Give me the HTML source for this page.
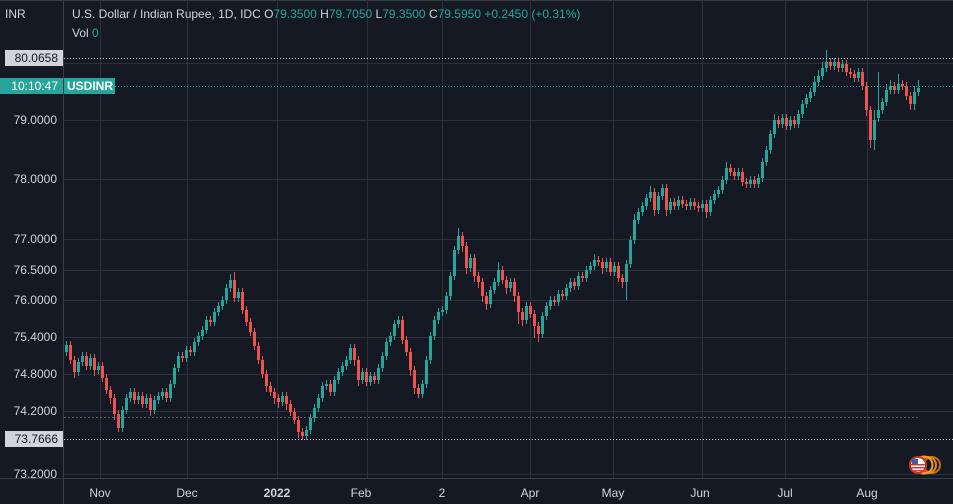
<!DOCTYPE html>
<html><head><meta charset="utf-8"><style>
html,body{margin:0;padding:0;background:#151924;width:953px;height:504px;overflow:hidden;font-family:"Liberation Sans",sans-serif}
svg{display:block}
</style></head><body>
<svg width="953" height="504" xmlns="http://www.w3.org/2000/svg" font-family="Liberation Sans, sans-serif">
<rect width="953" height="504" fill="#151924"/>
<line x1="0" y1="0.5" x2="953" y2="0.5" stroke="#3a3e48"/>
<g stroke="#2c303b" stroke-width="1">
<line x1="100.5" y1="0" x2="100.5" y2="478"/><line x1="187.5" y1="0" x2="187.5" y2="478"/>
<line x1="277.5" y1="0" x2="277.5" y2="478"/><line x1="367.5" y1="0" x2="367.5" y2="478"/>
<line x1="442.5" y1="0" x2="442.5" y2="478"/><line x1="530.5" y1="0" x2="530.5" y2="478"/>
<line x1="613.5" y1="0" x2="613.5" y2="478"/><line x1="702.5" y1="0" x2="702.5" y2="478"/>
<line x1="785.5" y1="0" x2="785.5" y2="478"/><line x1="867.5" y1="0" x2="867.5" y2="478"/>
<line x1="64" y1="63.5" x2="953" y2="63.5"/><line x1="64" y1="120.5" x2="953" y2="120.5"/>
<line x1="64" y1="179.5" x2="953" y2="179.5"/><line x1="64" y1="239.5" x2="953" y2="239.5"/>
<line x1="64" y1="270.5" x2="953" y2="270.5"/><line x1="64" y1="300.5" x2="953" y2="300.5"/>
<line x1="64" y1="337.5" x2="953" y2="337.5"/><line x1="64" y1="374.5" x2="953" y2="374.5"/>
<line x1="64" y1="411.5" x2="953" y2="411.5"/><line x1="64" y1="474.5" x2="953" y2="474.5"/>
</g>
<g stroke="#26a69a" fill="none">
<path stroke-width="1" d="M66.5 341V356M78.5 358V376M82.5 352V366M90.5 354V370M98.5 362V374M122.5 406V432M126.5 394V414M130.5 388V402M138.5 392V404M146.5 394V408M154.5 396V414M158.5 392V404M162.5 388V400M170.5 380V402M174.5 364V388M178.5 352V372M186.5 346V362M194.5 338V356M198.5 332V346M202.5 326V340M206.5 316V334M214.5 308V326M218.5 302V316M222.5 296V310M226.5 284V304M230.5 274V292M238.5 288V302M282.5 392V406M306.5 426V440M310.5 414V434M314.5 404V422M318.5 394V412M322.5 382V402M326.5 380V390M334.5 376V396M338.5 368V384M342.5 362V376M346.5 356V370M350.5 344V364M362.5 368V384M370.5 372V386M378.5 364V384M382.5 352V372M386.5 338V360M390.5 332V346M394.5 320V340M398.5 316V328M422.5 380V398M426.5 356V388M430.5 332V364M434.5 316V340M438.5 308V324M442.5 306V316M446.5 292V314M450.5 272V300M454.5 246V280M458.5 228V254M470.5 254V272M490.5 286V308M494.5 278V294M498.5 262V286M510.5 278V292M526.5 302V324M542.5 312V338M546.5 302V320M550.5 296V310M558.5 290V306M566.5 284V300M570.5 278V292M578.5 272V290M586.5 266V282M590.5 262V274M594.5 254V270M606.5 258V272M614.5 262V276M626.5 260V300M630.5 236V268M634.5 214V244M638.5 208V224M642.5 202V216M646.5 194V210M650.5 186V202M658.5 192V214M662.5 184V200M670.5 198V214M678.5 196V210M690.5 198V210M702.5 200V212M710.5 196V216M714.5 190V204M718.5 186V198M722.5 176V194M726.5 162V184M738.5 168V180M750.5 176V188M758.5 174V188M762.5 158V182M766.5 146V166M770.5 130V154M774.5 114V138M782.5 114V128M790.5 116V130M798.5 110V128M802.5 100V118M806.5 94V108M810.5 88V102M814.5 76V96M818.5 70V86M822.5 62V80M826.5 50V72M834.5 58V70M842.5 60V72M858.5 68V82M874.5 110V150M878.5 72V122M882.5 98V114M886.5 84V106M890.5 80V94M898.5 74V94M914.5 86V110M918.5 80V96"/>
<path stroke-width="3" d="M66.5 345V352M78.5 362V372M82.5 356V362M90.5 358V366M98.5 366V370M122.5 410V428M126.5 398V410M130.5 392V398M138.5 396V400M146.5 398V404M154.5 400V410M158.5 396V400M162.5 392V396M170.5 384V398M174.5 368V384M178.5 356V368M186.5 350V358M194.5 342V352M198.5 336V342M202.5 330V336M206.5 320V330M214.5 312V322M218.5 306V312M222.5 300V306M226.5 288V300M230.5 280V288M238.5 292V298M282.5 396V402M306.5 430V436M310.5 418V430M314.5 408V418M318.5 398V408M322.5 386V398M326.5 384V386M334.5 380V392M338.5 372V380M342.5 366V372M346.5 360V366M350.5 348V360M362.5 372V380M370.5 376V382M378.5 368V380M382.5 356V368M386.5 342V356M390.5 336V342M394.5 324V336M398.5 320V324M422.5 384V394M426.5 360V384M430.5 336V360M434.5 320V336M438.5 312V320M442.5 310V312M446.5 296V310M450.5 276V296M454.5 250V276M458.5 236V250M470.5 258V268M490.5 290V304M494.5 282V290M498.5 270V282M510.5 282V288M526.5 306V320M542.5 316V334M546.5 306V316M550.5 300V306M558.5 294V302M566.5 288V296M570.5 282V288M578.5 276V286M586.5 270V278M590.5 266V270M594.5 260V266M606.5 262V268M614.5 266V272M626.5 264V282M630.5 240V264M634.5 220V240M638.5 212V220M642.5 206V212M646.5 198V206M650.5 192V198M658.5 196V210M662.5 188V196M670.5 202V210M678.5 200V206M690.5 202V206M702.5 204V208M710.5 200V212M714.5 194V200M718.5 190V194M722.5 180V190M726.5 168V180M738.5 172V176M750.5 180V184M758.5 178V184M762.5 162V178M766.5 150V162M770.5 134V150M774.5 120V134M782.5 118V124M790.5 120V126M798.5 114V124M802.5 104V114M806.5 98V104M810.5 92V98M814.5 82V92M818.5 76V82M822.5 68V76M826.5 62V68M834.5 62V66M842.5 64V68M858.5 72V78M874.5 120V140M878.5 110V118M882.5 102V110M886.5 90V102M890.5 86V90M898.5 84V90M914.5 92V104M918.5 88V92"/>
</g>
<g stroke="#ef5350" fill="none">
<path stroke-width="1" d="M70.5 341V364M74.5 356V378M86.5 352V370M94.5 354V376M102.5 362V382M106.5 374V394M110.5 386V404M114.5 394V420M118.5 410V432M134.5 388V404M142.5 392V408M150.5 394V416M166.5 388V402M182.5 352V362M190.5 346V356M210.5 316V326M234.5 272V302M242.5 288V314M246.5 306V326M250.5 318V336M254.5 328V350M258.5 342V364M262.5 356V378M266.5 370V392M270.5 382V396M274.5 388V404M278.5 394V408M286.5 392V410M290.5 400V416M294.5 408V424M298.5 416V438M302.5 428V440M330.5 380V396M354.5 344V366M358.5 356V386M366.5 368V386M374.5 372V384M402.5 316V344M406.5 336V356M410.5 348V376M414.5 366V394M418.5 384V398M462.5 232V252M466.5 242V274M474.5 254V282M478.5 272V288M482.5 278V302M486.5 292V310M502.5 266V284M506.5 276V294M514.5 278V302M518.5 292V324M522.5 308V326M530.5 302V318M534.5 310V338M538.5 322V342M554.5 296V306M562.5 290V300M574.5 278V290M582.5 272V282M598.5 256V266M602.5 258V274M610.5 258V276M618.5 262V282M622.5 274V288M654.5 188V216M666.5 184V216M674.5 198V210M682.5 196V208M686.5 200V210M694.5 198V210M698.5 202V212M706.5 200V218M730.5 164V176M734.5 168V180M742.5 168V186M746.5 178V188M754.5 176V188M778.5 116V128M786.5 114V130M794.5 116V128M830.5 58V70M838.5 58V72M846.5 60V76M850.5 68V78M854.5 70V82M862.5 68V90M866.5 82V116M870.5 106V148M894.5 82V94M902.5 80V90M906.5 82V100M910.5 92V110"/>
<path stroke-width="3" d="M70.5 345V360M74.5 360V372M86.5 356V366M94.5 358V370M102.5 366V378M106.5 378V390M110.5 390V398M114.5 398V414M118.5 414V428M134.5 392V400M142.5 396V404M150.5 398V410M166.5 392V398M182.5 356V358M190.5 350V352M210.5 320V322M234.5 280V298M242.5 292V310M246.5 310V322M250.5 322V332M254.5 332V346M258.5 346V360M262.5 360V374M266.5 374V386M270.5 386V392M274.5 392V398M278.5 398V402M286.5 396V404M290.5 404V412M294.5 412V420M298.5 420V432M302.5 432V436M330.5 384V392M354.5 348V360M358.5 360V380M366.5 372V382M374.5 376V380M402.5 320V340M406.5 340V352M410.5 352V370M414.5 370V388M418.5 388V394M462.5 236V246M466.5 246V268M474.5 258V276M478.5 276V282M482.5 282V296M486.5 296V304M502.5 270V280M506.5 280V288M514.5 282V296M518.5 296V312M522.5 312V320M530.5 306V314M534.5 314V326M538.5 326V334M554.5 300V302M562.5 294V296M574.5 282V286M582.5 276V278M598.5 260V262M602.5 262V268M610.5 262V272M618.5 266V278M622.5 278V282M654.5 192V210M666.5 188V210M674.5 202V206M682.5 200V204M686.5 204V206M694.5 202V206M698.5 206V208M706.5 204V212M730.5 168V172M734.5 172V176M742.5 172V182M746.5 182V184M754.5 180V184M778.5 120V124M786.5 118V126M794.5 120V124M830.5 62V66M838.5 62V68M846.5 64V72M850.5 72V74M854.5 74V78M862.5 72V86M866.5 86V110M870.5 110V140M894.5 86V90M902.5 84V86M906.5 86V96M910.5 96V104"/>
</g>
<line x1="64" y1="58.5" x2="953" y2="58.5" stroke="#d1d4dc" stroke-dasharray="1,2"/>
<line x1="64" y1="439.5" x2="953" y2="439.5" stroke="#d1d4dc" stroke-dasharray="1,2"/>
<line x1="64" y1="86.5" x2="953" y2="86.5" stroke="#26a69a" stroke-dasharray="1,2"/>
<line x1="64" y1="417.5" x2="918" y2="417.5" stroke="#5d606b" stroke-dasharray="2,2"/>
<line x1="63.5" y1="0" x2="63.5" y2="504" stroke="#3a3e48"/>
<line x1="0" y1="478.5" x2="953" y2="478.5" stroke="#3a3e48"/>
<g fill="#d1d4dc" font-size="12">
<text x="5" y="18">INR</text>
<text x="72" y="18">U.S. Dollar / Indian Rupee, 1D, IDC  O<tspan fill="#26a69a">79.3500</tspan>  H<tspan fill="#26a69a">79.7050</tspan>  L<tspan fill="#26a69a">79.3500</tspan>  C<tspan fill="#26a69a">79.5950  +0.2450 (+0.31%)</tspan></text>
<text x="72" y="37">Vol  <tspan fill="#26a69a">0</tspan></text>
<text x="57" y="124" text-anchor="end">79.0000</text>
<text x="57" y="183" text-anchor="end">78.0000</text>
<text x="57" y="243" text-anchor="end">77.0000</text>
<text x="57" y="274" text-anchor="end">76.5000</text>
<text x="57" y="304" text-anchor="end">76.0000</text>
<text x="57" y="341" text-anchor="end">75.4000</text>
<text x="57" y="378" text-anchor="end">74.8000</text>
<text x="57" y="415" text-anchor="end">74.2000</text>
<text x="57" y="478" text-anchor="end">73.2000</text>
<text x="100" y="497" text-anchor="middle">Nov</text>
<text x="187" y="497" text-anchor="middle">Dec</text>
<text x="277" y="497" text-anchor="middle" font-weight="bold">2022</text>
<text x="361" y="497" text-anchor="middle">Feb</text>
<text x="442" y="497" text-anchor="middle">2</text>
<text x="530" y="497" text-anchor="middle">Apr</text>
<text x="613" y="497" text-anchor="middle">May</text>
<text x="700" y="497" text-anchor="middle">Jun</text>
<text x="785" y="497" text-anchor="middle">Jul</text>
<text x="867" y="497" text-anchor="middle">Aug</text>
</g>
<rect x="5" y="50" width="58" height="16" fill="#d1d4dc"/>
<text x="58" y="62" text-anchor="end" font-size="12" fill="#131722">80.0658</text>
<rect x="5" y="431" width="58" height="16" fill="#d1d4dc"/>
<text x="58" y="443" text-anchor="end" font-size="12" fill="#131722">73.7666</text>
<rect x="0" y="78" width="63" height="16" fill="#26a69a"/>
<text x="58" y="90" text-anchor="end" font-size="12" fill="#fff">10:10:47</text>
<rect x="64" y="78" width="51" height="16" fill="#26a69a"/>
<text x="67" y="90" font-size="12" font-weight="bold" fill="#fff">USDINR</text>
<circle cx="932" cy="465" r="8" fill="none" stroke="#c76a12" stroke-width="2"/>
<circle cx="928" cy="465" r="8" fill="none" stroke="#e58a1c" stroke-width="2"/>
<circle cx="924" cy="465" r="8.5" fill="none" stroke="#f0a030" stroke-width="2"/>
<circle cx="918" cy="465" r="9" fill="#c0392b"/>
<circle cx="918" cy="465" r="7" fill="#fff"/>
<rect x="911" y="464" width="14" height="1.5" fill="#d33"/><rect x="911" y="467" width="14" height="1.5" fill="#d33"/><rect x="912" y="470" width="12" height="1.5" fill="#d33"/>
<rect x="912" y="459" width="6" height="5" fill="#3a5fb0"/>
</svg>
</body></html>
